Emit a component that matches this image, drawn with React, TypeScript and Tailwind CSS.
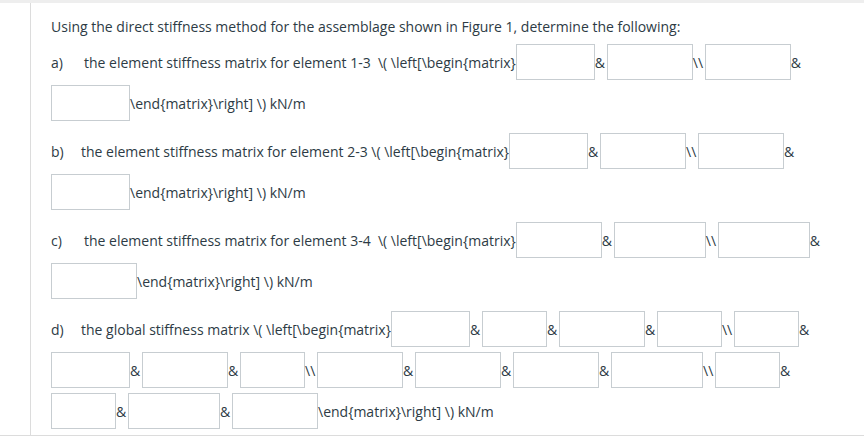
type Item = { t: "text"; v: string } | { t: "box"; w: number } | { t: "sym"; v: string };

const T = (v: string): Item => ({ t: "text", v });
const B = (w: number): Item => ({ t: "box", w });
const A: Item = { t: "sym", v: "&" };
const S: Item = { t: "sym", v: "\\\\" };

const END = "\\end{matrix}\\right] \\) kN/m";

const parts: { label: string; lw: number; lines: Item[][] }[] = [
  {
    label: "a)",
    lw: 33,
    lines: [
      [T("the element stiffness matrix for element 1-3  \\( \\left[\\begin{matrix}"), B(79), A, B(86), S, B(86), A],
      [B(79), T(END)],
    ],
  },
  {
    label: "b)",
    lw: 30,
    lines: [
      [T("the element stiffness matrix for element 2-3 \\( \\left[\\begin{matrix}"), B(79), A, B(86), S, B(86), A],
      [B(79), T(END)],
    ],
  },
  {
    label: "c)",
    lw: 33,
    lines: [
      [T("the element stiffness matrix for element 3-4  \\( \\left[\\begin{matrix}"), B(86), A, B(92), S, B(92), A],
      [B(86), T(END)],
    ],
  },
  {
    label: "d)",
    lw: 30,
    lines: [
      [T("the global stiffness matrix \\( \\left[\\begin{matrix}"), B(79), A, B(65), A, B(86), A, B(65), S, B(65), A],
      [B(79), A, B(86), A, B(65), S, B(86), A, B(86), A, B(86), A, B(92), S, B(65), A],
      [B(65), A, B(92), A, B(86), T(END)],
    ],
  },
];

function Piece({ item }: { item: Item }) {
  if (item.t === "box") {
    return <span className="h-[36px] shrink-0 border border-[#c7cdd1] bg-white" style={{ width: item.w }} />;
  }
  if (item.t === "sym") {
    return <span className="w-[12px] shrink-0 text-left">{item.v}</span>;
  }
  return <span className="whitespace-pre">{item.v}</span>;
}

export default function App() {
  return (
    <div className="h-[438px] w-[864px] bg-white text-[14px] text-[#2d3b45]" style={{ fontFamily: '"Open Sans", "Noto Sans", sans-serif' }}>
      <div className="h-[3px] bg-[#eeeeee]" />
      <div className="ml-[30px] h-[432px] border-l border-[#dcdcdc] pl-[20px] pt-[13px]">
        <p className="flex h-[20px] items-center">
          Using the direct stiffness method for the assemblage shown in Figure 1, determine the following:
        </p>
        <div className="mt-[8px] flex flex-col gap-[12px]">
          {parts.map((p) => (
            <div key={p.label} className="flex flex-col gap-[5px]">
              {p.lines.map((line, i) => (
                <div key={i} className="flex h-[36px] items-center">
                  {i === 0 && (
                    <span className="shrink-0" style={{ width: p.lw }}>
                      {p.label}
                    </span>
                  )}
                  {line.map((item, j) => (
                    <Piece key={j} item={item} />
                  ))}
                </div>
              ))}
            </div>
          ))}
        </div>
      </div>
      <div className="h-[1px] bg-[#dcdcdc]" />
    </div>
  );
}
